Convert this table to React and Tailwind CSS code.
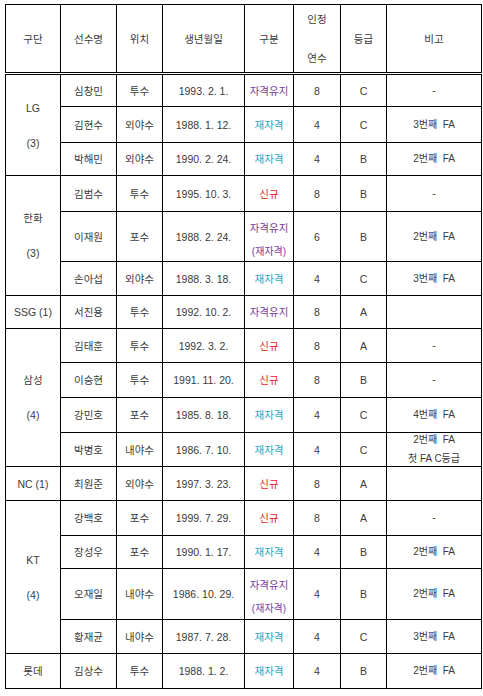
import React from "react";

const PURPLE = "text-[#7b3a9e]";
const CYAN = "text-[#1aa6c4]";
const RED = "text-[#e3202a]";

const kind = {
  keep: { label: "자격유지", cls: PURPLE },
  re: { label: "재자격", cls: CYAN },
  new: { label: "신규", cls: RED },
  keepRe: { label: "자격유지", sub: "(재자격)", cls: PURPLE },
};

const teams = [
  {
    team: "LG",
    count: "(3)",
    rows: [
      { name: "심창민", pos: "투수", birth: "1993. 2. 1.", type: "keep", years: 8, grade: "C", note: "-", h: 33 },
      { name: "김현수", pos: "외야수", birth: "1988. 1. 12.", type: "re", years: 4, grade: "C", note: "3번째  FA", h: 36 },
      { name: "박해민", pos: "외야수", birth: "1990. 2. 24.", type: "re", years: 4, grade: "B", note: "2번째  FA", h: 33 },
    ],
  },
  {
    team: "한화",
    count: "(3)",
    rows: [
      { name: "김범수", pos: "투수", birth: "1995. 10. 3.", type: "new", years: 8, grade: "B", note: "-", h: 36 },
      { name: "이재원", pos: "포수", birth: "1988. 2. 24.", type: "keepRe", years: 6, grade: "B", note: "2번째  FA", h: 50 },
      { name: "손아섭", pos: "외야수", birth: "1988. 3. 18.", type: "re", years: 4, grade: "C", note: "3번째  FA", h: 34 },
    ],
  },
  {
    team: "SSG (1)",
    rows: [
      { name: "서진용", pos: "투수", birth: "1992. 10. 2.", type: "keep", years: 8, grade: "A", note: "", h: 33 },
    ],
  },
  {
    team: "삼성",
    count: "(4)",
    rows: [
      { name: "김태훈", pos: "투수", birth: "1992. 3. 2.", type: "new", years: 8, grade: "A", note: "-", h: 34 },
      { name: "이승현", pos: "투수", birth: "1991. 11. 20.", type: "new", years: 8, grade: "B", note: "-", h: 35 },
      { name: "강민호", pos: "포수", birth: "1985. 8. 18.", type: "re", years: 4, grade: "C", note: "4번째  FA", h: 35 },
      { name: "박병호", pos: "내야수", birth: "1986. 7. 10.", type: "re", years: 4, grade: "C", note: "2번째  FA", note2: "첫 FA C등급", h: 34 },
    ],
  },
  {
    team: "NC (1)",
    rows: [
      { name: "최원준", pos: "외야수", birth: "1997. 3. 23.", type: "new", years: 8, grade: "A", note: "", h: 34 },
    ],
  },
  {
    team: "KT",
    count: "(4)",
    rows: [
      { name: "강백호", pos: "포수", birth: "1999. 7. 29.", type: "new", years: 8, grade: "A", note: "-", h: 35 },
      { name: "장성우", pos: "포수", birth: "1990. 1. 17.", type: "re", years: 4, grade: "B", note: "2번째  FA", h: 33 },
      { name: "오재일", pos: "내야수", birth: "1986. 10. 29.", type: "keepRe", years: 4, grade: "B", note: "2번째  FA", h: 51 },
      { name: "황재균", pos: "내야수", birth: "1987. 7. 28.", type: "re", years: 4, grade: "C", note: "3번째  FA", h: 34 },
    ],
  },
  {
    team: "롯데",
    rows: [
      { name: "김상수", pos: "투수", birth: "1988. 1. 2.", type: "re", years: 4, grade: "B", note: "2번째  FA", h: 35 },
    ],
  },
];

const cell = "border border-black text-center align-middle p-0";

function TypeCell({ type }) {
  const k = kind[type];
  if (k.sub) {
    return (
      <td className={`${cell} ${k.cls}`}>
        <div className="flex flex-col items-center gap-[10px] pt-[6px] leading-[14px]">
          <span>{k.label}</span>
          <span className="text-[10px]">{k.sub}</span>
        </div>
      </td>
    );
  }
  return <td className={`${cell} ${k.cls}`}>{k.label}</td>;
}

export default function App() {
  return (
    <div className="bg-white w-[483px] h-[696px] pt-[4px] pl-[5px]">
      <table
        className="table-fixed border-collapse w-[476px] text-[10.5px] leading-[14px] text-[#3a3a3a]"
        style={{ fontFamily: '"Liberation Sans", "Noto Sans CJK KR", sans-serif' }}
      >
        <colgroup>
          <col className="w-[55px]" />
          <col className="w-[56px]" />
          <col className="w-[46px]" />
          <col className="w-[82px]" />
          <col className="w-[49px]" />
          <col className="w-[47px]" />
          <col className="w-[46px]" />
          <col className="w-[95px]" />
        </colgroup>
        <thead>
          <tr className="h-[69px] border-b-[3px] border-double border-black">
            <th className={`${cell} font-normal`}>구단</th>
            <th className={`${cell} font-normal`}>선수명</th>
            <th className={`${cell} font-normal`}>위치</th>
            <th className={`${cell} font-normal`}>생년월일</th>
            <th className={`${cell} font-normal`}>구분</th>
            <th className={`${cell} font-normal`}>
              <div>인정</div>
              <div className="mt-[25px]">연수</div>
            </th>
            <th className={`${cell} font-normal`}>등급</th>
            <th className={`${cell} font-normal`}>비고</th>
          </tr>
        </thead>
        <tbody>
          {teams.map((t) =>
            t.rows.map((r, i) => (
              <tr key={t.team + r.name} style={{ height: r.h }}>
                {i === 0 && (
                  <td rowSpan={t.rows.length} className={cell}>
                    <div>{t.team}</div>
                    {t.count && <div className="mt-[21px]">{t.count}</div>}
                  </td>
                )}
                <td className={cell}>{r.name}</td>
                <td className={cell}>{r.pos}</td>
                <td className={cell}>{r.birth}</td>
                <TypeCell type={r.type} />
                <td className={cell}>{r.years}</td>
                <td className={cell}>{r.grade}</td>
                <td className={`${cell} text-[10px] whitespace-pre`}>
                  <div>{r.note}</div>
                  {r.note2 && <div className="mt-[5px]">{r.note2}</div>}
                </td>
              </tr>
            ))
          )}
        </tbody>
      </table>
    </div>
  );
}
